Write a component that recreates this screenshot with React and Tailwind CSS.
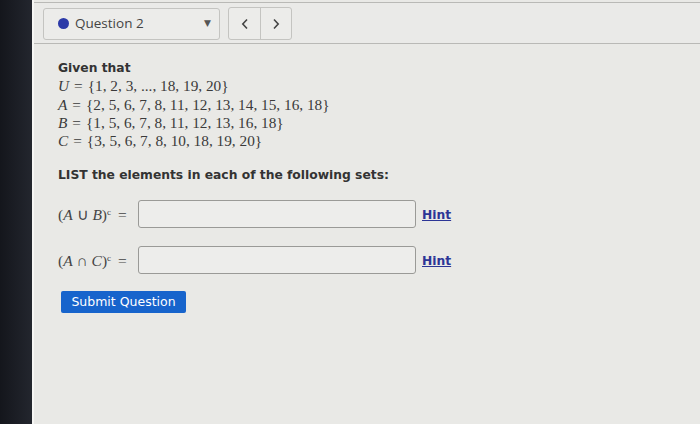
export default function App() {
  const eq = <span className="mx-[5px]">=</span>;
  return (
    <div className="flex h-[424px] w-[700px] overflow-hidden bg-[#e9e9e6] font-['DejaVu_Sans',sans-serif] text-[#333]">
      <div className="w-[32px] shrink-0 bg-gradient-to-r from-[#14161c] to-[#23262e]" />
      <div className="w-[2px] shrink-0 bg-[#f6f6f4]" />
      <div className="flex flex-1 flex-col">
        {/* Top bar */}
        <div className="mt-[2px] h-[42px] border-y border-[#b9b9b6] bg-[#eaeae8] pl-[9px] pt-[4px]">
          <div className="flex items-center gap-2">
            <div className="flex h-[32px] w-[177px] items-center rounded-[3px] border border-[#c4c4c1] bg-[#ececea] pl-[14px] pr-[8px]">
              <span className="h-[11px] w-[11px] rounded-full bg-[#2c3aa8]" />
              <span className="ml-[6px] font-['Open_Sans',sans-serif] text-[13.5px] text-[#444]">Question 2</span>
              <span className="ml-auto text-[9px] text-[#555]">▼</span>
            </div>
            <div className="flex h-[33px] w-[64px] rounded-[3px] border border-[#c4c4c1] bg-[#ececea]">
              <div className="flex w-[32px] items-center justify-center border-r border-[#c4c4c1]">
                <svg width="8" height="12" viewBox="0 0 8 12" fill="none" stroke="#444" strokeWidth="1.6">
                  <path d="M6 1.5 1.8 6 6 10.5" />
                </svg>
              </div>
              <div className="flex flex-1 items-center justify-center">
                <svg width="8" height="12" viewBox="0 0 8 12" fill="none" stroke="#444" strokeWidth="1.6">
                  <path d="M2 1.5 6.2 6 2 10.5" />
                </svg>
              </div>
            </div>
          </div>
        </div>

        {/* Body */}
        <div className="pl-[24px] pt-[15px]">
          <div className="text-[12.3px] font-bold leading-[18.3px] text-[#333]">Given that</div>
          <div className="font-['Liberation_Serif',serif] text-[15.3px] leading-[18.3px] text-[#3a3a3a]">
            <div><i>U</i>{eq}{'{'}1, 2, 3, ..., 18, 19, 20{'}'}</div>
            <div><i>A</i>{eq}{'{'}2, 5, 6, 7, 8, 11, 12, 13, 14, 15, 16, 18{'}'}</div>
            <div><i>B</i>{eq}{'{'}1, 5, 6, 7, 8, 11, 12, 13, 16, 18{'}'}</div>
            <div><i>C</i>{eq}{'{'}3, 5, 6, 7, 8, 10, 18, 19, 20{'}'}</div>
          </div>

          <div className="mt-[17px] text-[12.3px] font-bold leading-[17px] text-[#333]">
            LIST the elements in each of the following sets:
          </div>

          <div className="mt-[16px] flex items-center">
            <span className="w-[80px] font-['Liberation_Serif',serif] text-[15.5px] text-[#444]">
              (<i>A</i> ∪ <i>B</i>)<sup className="text-[9px]">c</sup>
              <span className="ml-[7px]">=</span>
            </span>
            <div className="h-[28px] w-[278px] rounded-[3px] border border-[#9a9a97] bg-[#ededeb]" />
            <span className="ml-[6px] mt-[2px] text-[12.3px] font-bold text-[#2c3596] underline">Hint</span>
          </div>

          <div className="mt-[18px] flex items-center">
            <span className="w-[80px] font-['Liberation_Serif',serif] text-[15.5px] text-[#444]">
              (<i>A</i> ∩ <i>C</i>)<sup className="text-[9px]">c</sup>
              <span className="ml-[7px]">=</span>
            </span>
            <div className="h-[28px] w-[278px] rounded-[3px] border border-[#9a9a97] bg-[#ededeb]" />
            <span className="ml-[6px] mt-[2px] text-[12.3px] font-bold text-[#2c3596] underline">Hint</span>
          </div>

          <button className="ml-[3px] mt-[17px] h-[22px] w-[125px] rounded-[2px] bg-[#1764cc] text-[12.5px] text-white">
            Submit Question
          </button>
        </div>
      </div>
    </div>
  );
}
